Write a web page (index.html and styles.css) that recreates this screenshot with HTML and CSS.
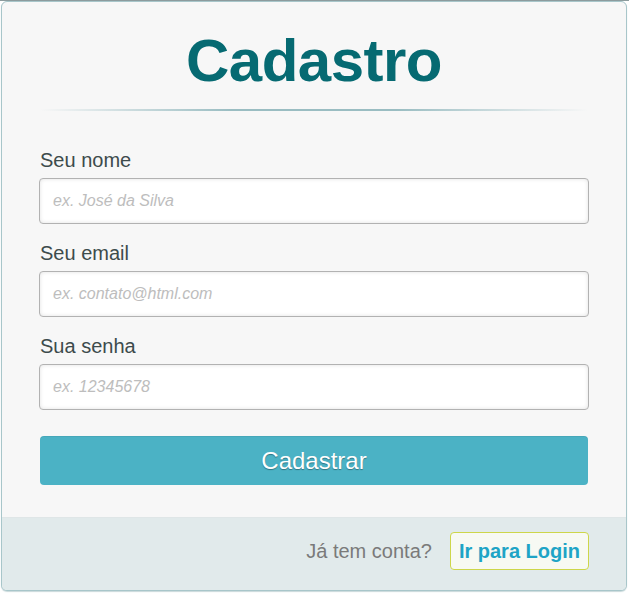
FILE: index.html
```html
<!DOCTYPE html>
<html lang="pt-BR">
<head>
<meta charset="utf-8">
<title>Cadastro</title>
<link rel="stylesheet" href="styles.css">
</head>
<body>
<div class="card">
  <div class="content">
    <h1 class="title">Cadastro</h1>
    <div class="divider"></div>
    <form class="form">
      <div class="field">
        <label class="label" for="nome">Seu nome</label>
        <input class="input" id="nome" type="text" placeholder="ex. José da Silva">
      </div>
      <div class="field">
        <label class="label" for="email">Seu email</label>
        <input class="input" id="email" type="email" placeholder="ex. contato@html.com">
      </div>
      <div class="field">
        <label class="label" for="senha">Sua senha</label>
        <input class="input" id="senha" type="password" placeholder="ex. 12345678">
      </div>
      <button class="submit" type="button">Cadastrar</button>
    </form>
  </div>
  <div class="footer">
    <span class="question">Já tem conta?</span>
    <a class="login" href="#">Ir para Login</a>
  </div>
</div>
</body>
</html>
```
FILE: styles.css
```css
html {
  border-top: 1px solid #8c9b9d;
}
body {
  margin: 0;
  background: #ffffff;
  font-family: "Liberation Sans", Arial, sans-serif;
}
.card {
  margin: 0 2px 2px 1px;
  border: 1px solid #a8c6ca;
  border-radius: 6px;
  background: #f7f7f7;
  overflow: hidden;
  box-shadow: 0 1px 1px rgba(120, 160, 165, 0.4);
}
.content {
  padding: 23px 38px 32px 38px;
}
.title {
  margin: 0;
  text-align: center;
  font-size: 60px;
  letter-spacing: -0.5px;
  line-height: 71px;
  font-weight: bold;
  color: #066a72;
}
.divider {
  height: 2px;
  margin: 13px 0 0 0;
  background: linear-gradient(to right, rgba(157, 191, 196, 0), #9abdc2 35%, #9abdc2 65%, rgba(157, 191, 196, 0));
}
.form {
  display: flex;
  flex-direction: column;
  margin-top: 38px;
}
.field {
  display: flex;
  flex-direction: column;
  gap: 6px;
  margin-bottom: 18px;
}
.label {
  font-size: 20px;
  line-height: 23px;
  color: #3d4b4c;
}
.input {
  box-sizing: border-box;
  height: 46px;
  margin: 0 -1px;
  padding: 0 13px;
  border: 1px solid #b2b2b2;
  border-radius: 4px;
  background: #ffffff;
  box-shadow: inset 0 0 4px rgba(0, 0, 0, 0.12);
  font-family: "Liberation Sans", Arial, sans-serif;
  font-size: 16px;
  color: #333;
}
.input::placeholder {
  color: #bdbdbd;
  font-style: italic;
}
.submit {
  margin-top: 8px;
  height: 49px;
  border: none;
  border-radius: 4px;
  background: #4bb2c5;
  box-shadow: inset 0 1px 0 rgba(0, 0, 0, 0.06);
  color: #ffffff;
  font-family: "Liberation Sans", Arial, sans-serif;
  font-size: 24px;
  text-shadow: 0 1px 1px rgba(0, 0, 0, 0.35);
}
.footer {
  display: flex;
  justify-content: flex-end;
  align-items: center;
  gap: 18px;
  padding: 14px 37px 20px 38px;
  background: #e1eaeb;
  border-top: 1px solid #dfe6e7;
}
.question {
  font-size: 20px;
  color: #7a7a7a;
}
.login {
  box-sizing: border-box;
  height: 38px;
  display: flex;
  align-items: center;
  padding: 0 8px;
  border: 1px solid #cdd64a;
  border-radius: 4px;
  background: #f7f9f3;
  color: #1ea4c6;
  font-size: 20px;
  font-weight: bold;
  text-decoration: none;
}
```
